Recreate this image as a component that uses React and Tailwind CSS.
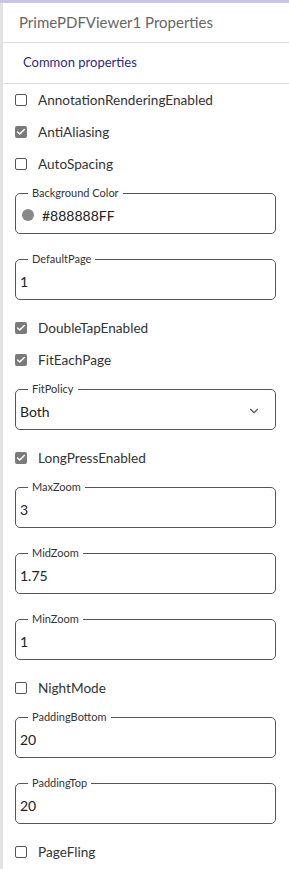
import { ChevronDown, Check } from "lucide-react";

const font = { fontFamily: "Lato, 'Open Sans', sans-serif" };

function CheckRow({ label, checked }) {
  return (
    <div className="h-[32px] flex items-center pl-[15px]">
      {checked ? (
        <span className="w-[12px] h-[12px] rounded-[2px] bg-[#7a7a7a] flex items-center justify-center">
          <Check size={10} strokeWidth={3.5} className="text-white" />
        </span>
      ) : (
        <span className="w-[12px] h-[12px] rounded-[2px] border border-[#555] bg-white" />
      )}
      <span className="ml-[11px] text-[13.6px] text-[#333]">{label}</span>
    </div>
  );
}

function Field({ label, children }) {
  return (
    <div className="h-[66px] pl-[15px] pr-[13px] pt-[6px]">
      <fieldset className="h-[48px] border border-[#555] rounded-[5px] px-[4px]">
        <legend className="ml-[8px] px-[4px] text-[11px] leading-[14px] text-[#333]">
          {label}
        </legend>
        <div className="h-[30px] flex items-center text-[14px] text-[#222]">
          {children}
        </div>
      </fieldset>
    </div>
  );
}

export default function App() {
  return (
    <div className="w-[289px] h-[869px] bg-white overflow-hidden" style={font}>
      <div className="h-[3px] bg-[#c9c3e6]" />
      <div className="flex h-[866px]">
        <div className="w-[3px] bg-[#e2e2e2]" />
        <div className="flex-1">
          <div className="h-[40px] flex items-center pl-[16px] border-b border-[#dcdcdc] text-[15px] text-[#666]">
            PrimePDFViewer1 Properties
          </div>
          <div className="h-[41px] flex items-center pl-[20px] border-b border-[#dcdcdc] text-[13px] text-[#2e2a7f]">
            Common properties
          </div>
          <div className="-ml-[3px]">
            <CheckRow label="AnnotationRenderingEnabled" />
            <CheckRow label="AntiAliasing" checked />
            <CheckRow label="AutoSpacing" />
            <Field label="Background Color">
              <span className="w-[12px] h-[12px] rounded-full bg-[#888] ml-[2px] mr-[8px]" />
              #888888FF
            </Field>
            <Field label="DefaultPage">1</Field>
            <CheckRow label="DoubleTapEnabled" checked />
            <CheckRow label="FitEachPage" checked />
            <Field label="FitPolicy">
              <span className="flex-1">Both</span>
              <ChevronDown size={14} className="text-[#555] mr-[10px]" />
            </Field>
            <CheckRow label="LongPressEnabled" checked />
            <Field label="MaxZoom">3</Field>
            <Field label="MidZoom">1.75</Field>
            <Field label="MinZoom">1</Field>
            <CheckRow label="NightMode" />
            <Field label="PaddingBottom">20</Field>
            <Field label="PaddingTop">20</Field>
            <CheckRow label="PageFling" />
          </div>
        </div>
      </div>
    </div>
  );
}
